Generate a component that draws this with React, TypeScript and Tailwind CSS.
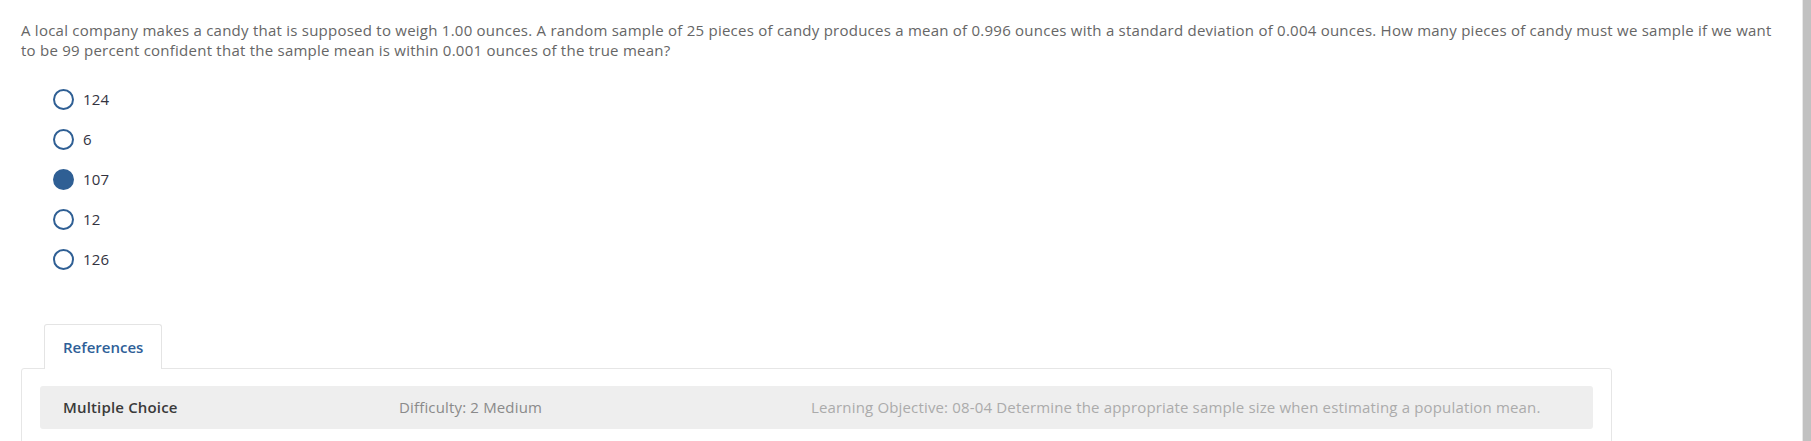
import React from "react";

const options = [
  { label: "124", checked: false },
  { label: "6", checked: false },
  { label: "107", checked: true },
  { label: "12", checked: false },
  { label: "126", checked: false },
];

export default function App() {
  return (
    <div
      className="flex w-[1811px] h-[441px] bg-white overflow-hidden"
      style={{ fontFamily: "'Open Sans', Arial, sans-serif" }}
    >
      <div className="flex-1 pl-[21px] pt-[21px]">
        <p className="text-[15px] leading-[19.5px] tracking-[0.24px] text-[#666666]">
          A local company makes a candy that is supposed to weigh 1.00 ounces. A random sample of 25 pieces of candy
          produces a mean of 0.996 ounces with a standard deviation of 0.004 ounces. How many pieces of candy must we
          sample if we want
          <br />
          to be 99 percent confident that the sample mean is within 0.001 ounces of the true mean?
        </p>

        <div className="mt-[19px] flex flex-col">
          {options.map((o) => (
            <label key={o.label} className="flex h-[40px] items-center pl-[32px]">
              <span
                className={
                  o.checked
                    ? "h-[21px] w-[21px] rounded-full border-[2.5px] border-[#2f5f94] bg-[#2f5f94]"
                    : "h-[21px] w-[21px] rounded-full border-[2.5px] border-[#2f5f94] bg-white"
                }
              />
              <span className="ml-[9px] text-[15px] tracking-[0.2px] text-[#33333f]">{o.label}</span>
            </label>
          ))}
        </div>

        <div className="mt-[45px] w-[1591px]">
          <div className="relative z-10 ml-[23px] -mb-px flex h-[45px] w-[118px] items-center rounded-t-[3px] border border-b-0 border-[#e4e4e4] bg-white pl-[18px]">
            <span className="text-[15px] font-semibold text-[#2f5f98]">References</span>
          </div>
          <div className="rounded-[3px] border border-[#e6e6e6] px-[18px] pt-[17px] pb-[20px]">
            <div className="flex h-[43px] items-center rounded-[3px] bg-[#eeeeee] pl-[23px] text-[15px] tracking-[0.16px]">
              <span className="w-[336px] font-semibold text-[#3a3a3a]">Multiple Choice</span>
              <span className="w-[412px] text-[#8a8a8a]">Difficulty: 2 Medium</span>
              <span className="text-[#ababab]">
                Learning Objective: 08-04 Determine the appropriate sample size when estimating a population mean.
              </span>
            </div>
          </div>
        </div>
      </div>
      <div className="w-[9px] border-l border-[#e8e8e8] bg-[#c1c1c1]" />
    </div>
  );
}
